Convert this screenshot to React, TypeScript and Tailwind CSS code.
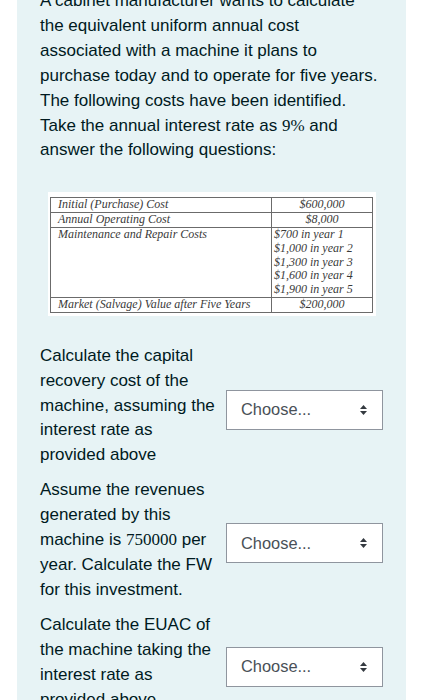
const serif = { fontFamily: '"Liberation Serif", "Times New Roman", serif' };

function Choose({ top }: { top: string }) {
  return (
    <div
      className={`${top} ml-auto flex h-[40px] w-[157px] shrink-0 items-center justify-between border border-[#8f959e] bg-white pl-[14px] pr-[15px] text-[16.4px] text-[#495057]`}
    >
      <span>Choose...</span>
      <svg width="7" height="10" viewBox="0 0 7 10" fill="#343a40">
        <path d="M0 4 L3.5 0 L7 4 Z" />
        <path d="M0 6 L7 6 L3.5 10 Z" />
      </svg>
    </div>
  );
}

export default function App() {
  const rows = [
    { label: 'Initial (Purchase) Cost', value: ['$600,000'], center: true },
    { label: 'Annual Operating Cost', value: ['$8,000'], center: true },
    {
      label: 'Maintenance and Repair Costs',
      value: ['$700 in year 1', '$1,000 in year 2', '$1,300 in year 3', '$1,600 in year 4', '$1,900 in year 5'],
      center: false,
    },
    { label: 'Market (Salvage) Value after Five Years', value: ['$200,000'], center: true },
  ];

  return (
    <div
      className="min-h-screen overflow-hidden bg-white text-[#001a1e]"
      style={{ fontFamily: '"Liberation Sans", Arial, sans-serif' }}
    >
      <div className="mx-[17px] -mt-[11px] bg-[#e7f3f5] px-[23px] pb-10">
        {/* Question text */}
        <p className="text-[17px] leading-[24.9px]">
          A cabinet manufacturer wants to calculate the equivalent uniform annual cost associated with a
          machine it plans to purchase today and to operate for five years. The following costs have been
          identified. Take the annual interest rate as <span style={serif}>9%</span> and answer the following
          questions:
        </p>

        {/* Cost table (pasted image) */}
        <div className="ml-[8px] mt-[29px] w-[328px] bg-white pb-[3px] pl-[2px] pr-[3px] pt-[5px]">
          <table
            className="w-[323px] border-collapse text-[12px] italic leading-[13.8px] text-[#3a3a3a]"
            style={serif}
          >
            <tbody>
              {rows.map((r) => (
                <tr key={r.label}>
                  <td className="w-[221px] border border-[#6b6b6b] pl-[7px] align-top">{r.label}</td>
                  <td className={`border border-[#6b6b6b] align-top ${r.center ? 'text-center' : 'pl-[2px]'}`}>
                    {r.value.map((v) => (
                      <div key={v}>{v}</div>
                    ))}
                  </td>
                </tr>
              ))}
            </tbody>
          </table>
        </div>

        {/* Sub-questions */}
        <div className="mt-[28px] flex flex-col gap-[10px] text-[17px] leading-[24.9px]">
          <div className="flex items-start">
            <div className="w-[176px]">
              Calculate the capital recovery cost of the machine, assuming the interest rate as provided above
            </div>
            <Choose top="mt-[46px]" />
          </div>
          <div className="flex items-start">
            <div className="w-[176px]">
              Assume the revenues generated by this machine is <span style={serif}>750000</span> per year.
              Calculate the FW for this investment.
            </div>
            <Choose top="mt-[45px]" />
          </div>
          <div className="flex items-start">
            <div className="w-[176px]">
              Calculate the EUAC of the machine taking the interest rate as provided above
            </div>
            <Choose top="mt-[34px]" />
          </div>
        </div>
      </div>
    </div>
  );
}
